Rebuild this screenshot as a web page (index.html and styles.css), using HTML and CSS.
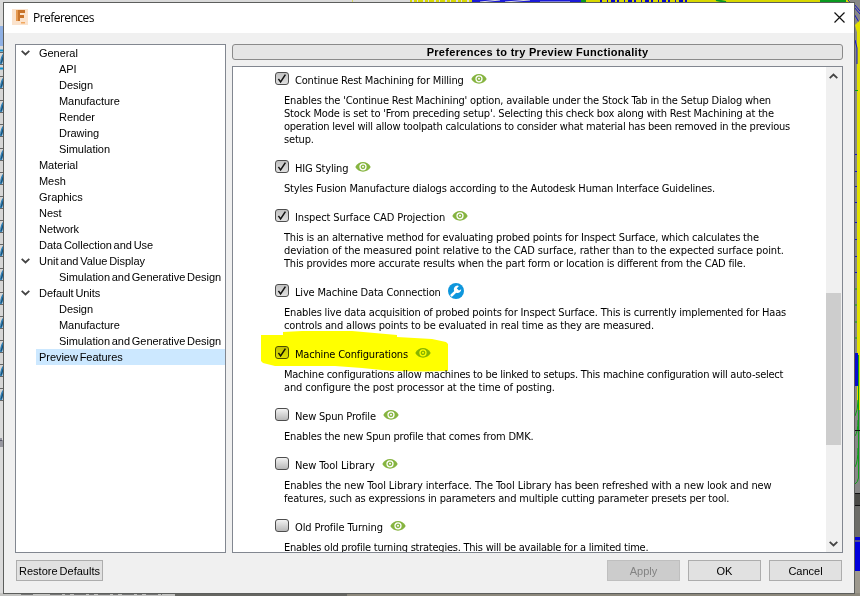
FILE: index.html
```html
<!DOCTYPE html>
<html lang="en">
<head>
    <meta charset="UTF-8">
    <title>Preferences</title>
    <link rel="stylesheet" href="styles.css">
</head>
<body>
<!-- shared icons -->
<svg class="symbols" width="0" height="0">
    <symbol id="eye" viewBox="0 0 16 12">
        <path d="M0.3 6 C3.5 -0.6 12.5 -0.6 15.7 6 C12.5 12.2 3.5 12.2 0.3 6 Z" fill="#86b440"/>
        <circle cx="8" cy="5.8" r="3" fill="none" stroke="#fff" stroke-width="1.3"/>
        <circle cx="8" cy="5.8" r="1" fill="#fff"/>
    </symbol>
    <symbol id="wrench" viewBox="0 0 16 16">
        <circle cx="8" cy="8" r="8" fill="#0e96dc"/>
        <path d="M3.7 12.3 L8.6 7.6" stroke="#fff" stroke-width="2.6" stroke-linecap="round"/>
        <path d="M10.9 2.9 A3.7 3.7 0 1 0 13.2 6.2 L11 7.5 L8.8 5.6 Z" fill="#fff"/>
    </symbol>
    <symbol id="check" viewBox="0 0 14 14">
        <path d="M3.4 6.9 L5.6 9.9 L10.4 2.7" fill="none" stroke="#111" stroke-width="1.5"/>
    </symbol>
    <symbol id="chevron" viewBox="0 0 9 6">
        <path d="M0.7 0.8 L4.5 4.4 L8.3 0.8" fill="none" stroke="#444" stroke-width="1.8"/>
    </symbol>
</svg>

<!-- application behind the dialog -->
<svg class="desktop" width="860" height="596">
    <defs>
        <pattern id="browser" width="4" height="24" y="51" patternUnits="userSpaceOnUse">
            <rect width="4" height="24" fill="#d6d6d6"/>
            <path d="M0 1.5 H4 M0 13.5 H4" stroke="#666"/>
            <path d="M4 2 Q0 5 0 13 H2 L4 7 Z" fill="#2f7fb5"/>
            <path d="M4 4 L1 12" stroke="#174c72"/>
        </pattern>
    </defs>
    <rect width="860" height="596" fill="#dadada"/>
    <rect y="26" width="4" height="20" fill="#8fb0e4"/>
    <rect y="51" width="4" height="350" fill="url(#browser)"/>
    <path d="M0 50.5 H4 M0 68.5 H4" stroke="#0f8fd0" stroke-width="2"/>
    <path d="M1 438 V447 M0 440.5 H2 M3 440 V447" stroke="#556"/>
    <!-- toolpaths along the top -->
    <rect x="410" width="450" height="3" fill="#d8d800"/>
    <rect x="472" width="109" height="3" fill="#1a1ad8"/>
    <path d="M480 2 L500 0 M505 2 L530 0 M540 2 H570" stroke="#ddd"/>
    <path d="M412 1 H470" stroke="#ddd" stroke-width="3" stroke-dasharray="2 3 1 5"/>
    <path d="M600 1 H692" stroke="#0808c8" stroke-width="3" stroke-dasharray="2 5 1 3 4 2"/>
    <path d="M581 1 H586 M716 0 L726 2 M820 1 H846" stroke="#0a9a20" stroke-width="2"/>
    <path d="M352.5 0 V3" stroke="#d8d860"/>
    <!-- toolpaths along the right edge -->
    <rect x="850" width="10" height="515" fill="#878787"/>
    <rect x="857" y="28" width="3" height="382" fill="#e2e000"/>
    <path d="M848 0 L860 14 M854 4 L860 11 M853 12 L860 24 M855 40 L857 48 V64" fill="none" stroke="#1414c8"/>
    <path d="M855 25 L860 20 V36 H858 Z" fill="#e2e000"/>
    <path d="M855 90.5 H858 M855 289 H857 M855 305 H857 M855 322 H857 M855 338 H857" stroke="#0aa014"/>
    <path d="M855 154.5 H857 M855 171.5 H857 M855 186.5 H857 M855 202.5 H857 M855 222.5 H857 M855 239.5 H857 M855 256.5 H857 M855 272.5 H857" stroke="#1414c8"/>
    <rect x="855" y="353" width="3" height="33" fill="#0a0acc"/>
    <path d="M858.5 355 V478 Q858 482 855 484 M855 416 Q858 410 858 400 M855 436 Q858 432 858 420 M855 467 Q858 462 858 448" fill="none" stroke="#0aa014"/>
    <rect x="855" y="493" width="5" height="12" fill="#4a4a46"/>
    <path d="M855 430.5 H860 M855 493.5 H860 M855 505.5 H860" stroke="#111"/>
    <rect x="855" y="506" width="5" height="31" fill="#6c6c68"/>
    <rect x="855" y="537" width="5" height="34" fill="#0000dc"/>
    <path d="M855 541 H860" stroke="#a0a040"/>
    <rect x="855" y="571" width="5" height="25" fill="#9d998e"/>
    <!-- strip under the dialog -->
    <rect y="593" width="175" height="3" fill="#c4c4c2"/>
    <rect x="175" y="593" width="172" height="3" fill="#666662"/>
    <rect x="347" y="593" width="513" height="3" fill="#8c887c"/>
    <path d="M21 594.5 H33 M50 594.5 H162" stroke="#777" stroke-dasharray="12 3 5 4"/>
</svg>

<div class="window">
    <div class="titlebar">
        <svg class="logo" width="16" height="16" viewBox="0 0 16 16">
            <rect width="16" height="16" fill="#fbe3cd"/>
            <path d="M5 1 H13 V4 H8 V6 H12 V9 H8 V12 H5 Z" fill="#c8732a"/>
            <path d="M4 1 H6 V12 H4 Z" fill="#e59a52"/>
            <path d="M9 13 H13 V14.5 H9 Z" fill="#f0a860"/>
        </svg>
        <span class="title">Preferences</span>
        <svg class="close" width="11" height="11" viewBox="0 0 11 11">
            <path d="M0.5 0.5 L10.5 10.5 M10.5 0.5 L0.5 10.5" stroke="#111" stroke-width="1.2"/>
        </svg>
    </div>

    <div class="content">
        <div class="tree">
            <div class="node"><svg class="arrow"><use href="#chevron"/></svg>General</div>
            <div class="node child">API</div>
            <div class="node child">Design</div>
            <div class="node child">Manufacture</div>
            <div class="node child">Render</div>
            <div class="node child">Drawing</div>
            <div class="node child">Simulation</div>
            <div class="node">Material</div>
            <div class="node">Mesh</div>
            <div class="node">Graphics</div>
            <div class="node">Nest</div>
            <div class="node">Network</div>
            <div class="node">Data Collection and Use</div>
            <div class="node"><svg class="arrow"><use href="#chevron"/></svg>Unit and Value Display</div>
            <div class="node child">Simulation and Generative Design</div>
            <div class="node"><svg class="arrow"><use href="#chevron"/></svg>Default Units</div>
            <div class="node child">Design</div>
            <div class="node child">Manufacture</div>
            <div class="node child">Simulation and Generative Design</div>
            <div class="node selected">Preview Features</div>
        </div>

        <div class="main">
            <div class="heading">Preferences to try Preview Functionality</div>
            <div class="panel">
                <div class="features">
                    <div class="feature">
                        <div class="name"><span class="box checked"><svg><use href="#check"/></svg></span>Continue Rest Machining for Milling<svg class="eye"><use href="#eye"/></svg></div>
                        <p>Enables the 'Continue Rest Machining' option, available under the Stock Tab in the Setup Dialog when<br>Stock Mode is set to 'From preceding setup'. Selecting this check box along with Rest Machining at the<br><span class="tight">operation level will allow toolpath calculations to consider what material has been removed in the previous</span><br>setup.</p>
                    </div>
                    <div class="feature">
                        <div class="name"><span class="box checked"><svg><use href="#check"/></svg></span>HIG Styling<svg class="eye"><use href="#eye"/></svg></div>
                        <p>Styles Fusion Manufacture dialogs according to the Autodesk Human Interface Guidelines.</p>
                    </div>
                    <div class="feature">
                        <div class="name loose"><span class="box checked"><svg><use href="#check"/></svg></span>Inspect Surface CAD Projection<svg class="eye"><use href="#eye"/></svg></div>
                        <p>This is an alternative method for evaluating probed points for Inspect Surface, which calculates the<br><span class="loose">deviation of the measured point relative to the CAD surface, rather than to the expected surface point.</span><br>This provides more accurate results when the part form or location is different from the CAD file.</p>
                    </div>
                    <div class="feature">
                        <div class="name"><span class="box checked"><svg><use href="#check"/></svg></span>Live Machine Data Connection<svg class="wrench"><use href="#wrench"/></svg></div>
                        <p>Enables live data acquisition of probed points for Inspect Surface. This is currently implemented for Haas<br>controls and allows points to be evaluated in real time as they are measured.</p>
                    </div>
                    <div class="feature">
                        <div class="name"><span class="box checked"><svg><use href="#check"/></svg></span>Machine Configurations<svg class="eye"><use href="#eye"/></svg></div>
                        <p><span class="tight">Machine configurations allow machines to be linked to setups. This machine configuration will auto-select</span><br><span class="loose">and configure the post processor at the time of posting.</span></p>
                        <svg class="marker" width="188" height="42" viewBox="261 330 188 42">
                            <path d="M261 335 H283 V332 L302 331 H352 L397 335 V337 L432 339 L446 342 L448 344 V371 L425 371.5 L392 371 L362 368 L335 366 H275 L263 363 L261 361 Z" fill="#ff0"/>
                        </svg>
                    </div>
                    <div class="feature">
                        <div class="name"><span class="box"></span>New Spun Profile<svg class="eye"><use href="#eye"/></svg></div>
                        <p>Enables the new Spun profile that comes from DMK.</p>
                    </div>
                    <div class="feature">
                        <div class="name loose"><span class="box"></span>New Tool Library<svg class="eye"><use href="#eye"/></svg></div>
                        <p><span class="loose">Enables the new Tool Library interface. The Tool Library has been refreshed with a new look and new</span><br>features, such as expressions in parameters and multiple cutting parameter presets per tool.</p>
                    </div>
                    <div class="feature">
                        <div class="name loose"><span class="box"></span>Old Profile Turning<svg class="eye"><use href="#eye"/></svg></div>
                        <p><span class="tight">Enables old profile turning strategies. This will be available for a limited time.</span></p>
                    </div>
                </div>
                <div class="scrollbar">
                    <svg class="arrow up"><use href="#chevron"/></svg>
                    <div class="track"><div class="thumb"></div></div>
                    <svg class="arrow"><use href="#chevron"/></svg>
                </div>
            </div>
        </div>
    </div>

    <div class="buttons">
        <button class="restore">Restore Defaults</button>
        <button class="apply" disabled>Apply</button>
        <button>OK</button>
        <button>Cancel</button>
    </div>
</div>
</body>
</html>
```
FILE: styles.css
```css
/* --------------------
 Preferences dialog
 -------------------- */

:root {
    --window-bg-color: #f0f0f0;
    --border-color: #828790;
    --selected-color: #cce8ff;
    --button-bg-color: #e1e1e1;
    --button-border-color: #adadad;
    --thumb-color: #cdcdcd;
}

* {
    box-sizing: border-box;
}

body {
    margin: 0;
    width: 860px;
    height: 596px;
    padding: 2px 5px 2px 3px;
    overflow: hidden;
    font-family: "Liberation Sans", Arial, sans-serif;
    font-size: 11px;
    color: #000;
}

.symbols {
    position: absolute;
}

/* sits behind the dialog */
.desktop {
    position: absolute;
    top: 0;
    left: 0;
    z-index: -1;
}

.window {
    width: 852px;
    height: 592px;
    border: 1px solid #5c5e5c;
    background-color: var(--window-bg-color);
    display: flex;
    flex-direction: column;
}

.titlebar {
    height: 30px;
    display: flex;
    align-items: center;
    padding: 0 9px 2px 8px;
    background-color: #fff;
}

.title {
    flex: 1;
    margin-left: 5px;
    font-family: "Open Sans", sans-serif;
    font-size: 12px;
    letter-spacing: -0.55px;
}

.content {
    height: 509px;
    margin-top: 11px;
    padding: 0 11px;
    display: flex;
    gap: 6px;
}

/* category tree */
.tree {
    width: 211px;
    border: 1px solid var(--border-color);
    background-color: #fff;
    letter-spacing: -0.04px;
    word-spacing: -1.2px;
}

.node {
    height: 16px;
    line-height: 17px;
    margin-left: 20px;
    padding-left: 3px;
    white-space: nowrap;
}

.child {
    padding-left: 23px;
}

.selected {
    background-color: var(--selected-color);
}

.arrow {
    width: 9px;
    height: 6px;
}

.node .arrow {
    float: left;
    margin: 5px 0 0 -18px;
}

/* right side */
.main {
    flex: 1;
    display: flex;
    flex-direction: column;
    gap: 6px;
}

.heading {
    height: 16px;
    line-height: 15px;
    border: 1px solid #8a8a8a;
    border-radius: 3px;
    background-color: #e5e5e5;
    text-align: center;
    font-weight: bold;
    letter-spacing: 0.3px;
}

.panel {
    height: 487px;
    display: flex;
    border: 1px solid var(--border-color);
    background-color: #fff;
}

.features {
    flex: 1;
    padding: 5px 0 0 42px;
    overflow: hidden;
    font-family: "DejaVu Sans Condensed", "DejaVu Sans", Tahoma, sans-serif;
    font-stretch: condensed;
    font-size: 11px;
    letter-spacing: -0.18px;
    white-space: nowrap;
}

.loose {
    letter-spacing: -0.11px;
}

.tight {
    letter-spacing: -0.24px;
}

.feature {
    position: relative;
    padding-bottom: 14px;
}

.name {
    height: 14px;
    padding-top: 2px;
    display: flex;
    align-items: center;
    line-height: 17px;
}

.feature p {
    margin: 8px 0 0 9px;
    line-height: 13px;
}

.box {
    align-self: flex-start;
    width: 14px;
    height: 13px;
    margin: -2px 6px 0 0;
    border: 1px solid #4d4d4d;
    border-radius: 3px;
    background: linear-gradient(#f2f2f2, #b8b8b8);
}

.checked {
    background: linear-gradient(#c2c2c2, #e0e0e0);
}

.box svg {
    display: block;
    width: 14px;
    height: 14px;
    margin: -1px;
}

.eye {
    width: 16px;
    height: 12px;
    margin: -2px 0 0 7px;
}

.wrench {
    width: 16px;
    height: 16px;
    margin: -2px 0 0 7px;
}

/* yellow highlighter stroke over the feature */
.marker {
    position: absolute;
    top: -16px;
    left: -14px;
    mix-blend-mode: multiply;
}

.scrollbar {
    width: 16px;
    padding: 6px 1px 5px 0;
    display: flex;
    flex-direction: column;
    align-items: center;
    background-color: var(--window-bg-color);
}

.up {
    transform: rotate(180deg);
}

.track {
    flex: 1;
    width: 15px;
    padding-top: 214px;
}

.thumb {
    height: 152px;
    background-color: var(--thumb-color);
}

/* bottom buttons */
.buttons {
    display: flex;
    gap: 8px;
    padding: 7px 12px 0;
}

button {
    width: 73px;
    height: 21px;
    padding: 0;
    border: 1px solid var(--button-border-color);
    background-color: var(--button-bg-color);
    font-family: inherit;
    font-size: 11px;
    color: #000;
}

.restore {
    width: 87px;
    margin-right: auto;
    word-spacing: -1px;
}

.apply {
    border-color: #bfbfbf;
    background-color: #ccc;
    color: #838383;
}
```
